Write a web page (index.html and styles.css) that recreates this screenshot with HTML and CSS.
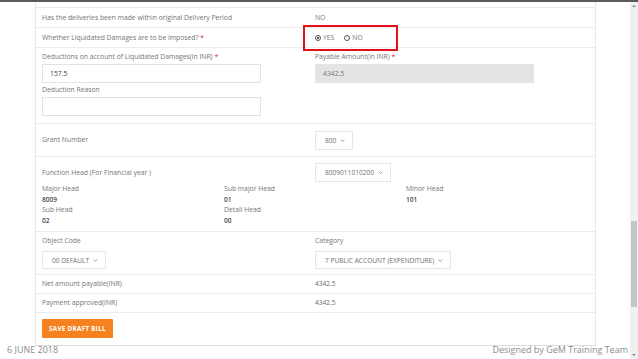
FILE: index.html
```html
<!DOCTYPE html>
<html>
<head>
<meta charset="utf-8">
<link rel="stylesheet" href="styles.css">
</head>
<body>
<div class="topline"></div>
<div class="main">
  <div class="page">
    <div class="card">
      <div class="row row-line">
        <div class="cell label">Has the deliveries been made within original Delivery Period</div>
        <div class="cell label">NO</div>
      </div>
      <div class="row row-line">
        <div class="cell label">Whether Liquidated Damages are to be imposed? <span class="req">*</span></div>
        <div class="cell">
          <div class="radios">
            <span class="radio on"></span><span class="label">YES</span>
            <span class="radio"></span><span class="label">NO</span>
          </div>
        </div>
      </div>
      <div class="row row-deduct">
        <div class="cell stack">
          <div class="label">Deductions on account of Liquidated Damages(in INR) <span class="req">*</span></div>
          <div class="input">157.5</div>
          <div class="label">Deduction Reason</div>
          <div class="input"></div>
        </div>
        <div class="cell stack">
          <div class="label">Payable Amount(in INR) <span class="req">*</span></div>
          <div class="input disabled">4342.5</div>
        </div>
      </div>
      <div class="row row-grant">
        <div class="cell label">Grant Number</div>
        <div class="cell"><div class="select">800 <svg class="chev" viewBox="0 0 8 5"><path d="M1 1l3 3 3-3"/></svg></div></div>
      </div>
      <div class="row row-func">
        <div class="func-top">
          <div class="cell label">Function Head (For Financial year )</div>
          <div class="cell"><div class="select">8009011010200 <svg class="chev" viewBox="0 0 8 5"><path d="M1 1l3 3 3-3"/></svg></div></div>
        </div>
        <div class="heads">
          <div class="head"><div class="label">Major Head</div><div class="val">8009</div></div>
          <div class="head"><div class="label">Sub major Head</div><div class="val">01</div></div>
          <div class="head"><div class="label">Minor Head</div><div class="val">101</div></div>
          <div class="head"><div class="label">Sub Head</div><div class="val">02</div></div>
          <div class="head"><div class="label">Detail Head</div><div class="val">00</div></div>
        </div>
      </div>
      <div class="row row-object">
        <div class="cell stack">
          <div class="label">Object Code</div>
          <div class="select sel2">00 DEFAULT <svg class="chev" viewBox="0 0 8 5"><path d="M1 1l3 3 3-3"/></svg></div>
        </div>
        <div class="cell stack">
          <div class="label">Category</div>
          <div class="select sel2">7 PUBLIC ACCOUNT (EXPENDITURE) <svg class="chev" viewBox="0 0 8 5"><path d="M1 1l3 3 3-3"/></svg></div>
        </div>
      </div>
      <div class="row row-line row-sum">
        <div class="cell label">Net amount payable(INR)</div>
        <div class="cell value">4342.5</div>
      </div>
      <div class="row row-line row-sum">
        <div class="cell label">Payment approved(INR)</div>
        <div class="cell value">4342.5</div>
      </div>
      <div class="row row-btn">
        <button class="btn">SAVE DRAFT BILL</button>
      </div>
    </div>
    <div class="footer">
      <span>6 JUNE 2018</span>
      <span>Designed by GeM Training Team</span>
    </div>
  </div>
  <div class="scrollbar">
    <div class="arrow up"></div>
    <div class="track"><div class="thumb"></div></div>
    <div class="arrow down"></div>
  </div>
</div>
</body>
</html>
```

FILE: styles.css
```css
* { box-sizing: border-box; }
html, body { margin: 0; padding: 0; }
body {
  width: 638px;
  height: 359px;
  overflow: hidden;
  background: #fff;
  font-family: "Open Sans", "Liberation Sans", sans-serif;
  font-size: 7px;
  color: #6f6f6f;
}
.topline { height: 2px; background: #5c5c5c; }
.main { display: flex; height: 357px; }
.page { width: 630px; display: flex; flex-direction: column; }
.card {
  margin-left: 35px;
  width: 561px;
  border-left: 1px solid #e8e8e8;
  border-right: 1px solid #e8e8e8;
  border-bottom: 1px solid #dcdcdc;
  padding-top: 5px;
}
.row {
  display: grid;
  grid-template-columns: 1fr 1fr;
  padding: 0 7px 0 6px;
  border-top: 1px solid #ececec;
}
.row-line { height: 20px; align-items: center; }
.row-sum { height: 19px; }
.label { font-size: 6.8px; line-height: 10px; color: #767676; white-space: nowrap; }
.value { font-size: 6.6px; line-height: 10px; color: #6a6a6a; }
.req { color: #e0261c; }
.stack { display: flex; flex-direction: column; }
.input {
  width: 219px;
  height: 19px;
  border: 1px solid #e2e2e2;
  background: #fff;
  font-size: 6.8px;
  color: #444;
  padding-left: 7px;
  display: flex;
  align-items: center;
  margin: 2px 0 2px;
}
.input.disabled { background: #e4e4e4; border-color: #e4e4e4; color: #777; }
.row-deduct { height: 76px; padding-top: 4px; }
.radios {
  display: flex;
  align-items: center;
  height: 10px;
  position: relative;
}
.radios::before {
  content: "";
  position: absolute;
  left: -12px;
  top: -8px;
  width: 91px;
  height: 22px;
  border: 2px solid #e3101a;
}
.radio {
  width: 6px; height: 6px;
  border: 1px solid #555;
  border-radius: 50%;
  margin-right: 2px;
  position: relative;
}
.radio.on::after {
  content: "";
  position: absolute;
  left: 1px; top: 1px;
  width: 2px; height: 2px;
  border-radius: 50%;
  background: #222;
}
.radios .label + .radio { margin-left: 10px; }
.select {
  display: flex;
  width: max-content;
  align-items: center;
  height: 19px;
  border: 1px solid #e6e6e6;
  padding: 0 7px 0 9px;
  font-size: 6.6px;
  color: #707070;
  white-space: nowrap;
}
.chev { width: 5px; height: 3px; margin-left: 4px; fill: none; stroke: #777; stroke-width: 1.2; }
.row-grant { height: 33px; align-items: center; }
.row-func { height: 75px; padding-top: 6px; display: block; }
.func-top { display: grid; grid-template-columns: 1fr 1fr; align-items: center; }
.heads {
  display: grid;
  grid-template-columns: repeat(3, 1fr);
  margin-top: 2px;
}
.val { font-size: 6.6px; line-height: 11px; color: #4a4a4a; font-weight: 600; }
.row-object { height: 43px; padding-top: 4px; }
.row-object .label { margin-bottom: 5px; }
.sel2 { height: 18px; }
.row-btn { height: 33px; display: block; padding-top: 6px; }
.btn {
  display: block;
  width: 71px;
  height: 19px;
  border: none;
  border-radius: 1px;
  background: #f5821f;
  color: #fff;
  font-family: "Open Sans", "Liberation Sans", sans-serif;
  font-weight: 700;
  font-size: 6.3px;
  letter-spacing: 0.3px;
  padding: 0;
}
.footer {
  display: flex;
  justify-content: space-between;
  padding: 0 2px 0 7px;
  font-size: 9px;
  line-height: 8px;
  color: #8c8c8c;
}
.scrollbar {
  width: 8px;
  background: #f0f0f0;
  display: flex;
  flex-direction: column;
}
.arrow { height: 8px; position: relative; }
.arrow::after {
  content: "";
  position: absolute;
  left: 2px;
  border-left: 2px solid transparent;
  border-right: 2px solid transparent;
}
.arrow.up::after { top: 3px; border-bottom: 2px solid #888; }
.arrow.down::after { top: 3px; border-top: 2px solid #888; }
.track { flex: 1; padding-top: 211px; }
.thumb { height: 86px; background: #c6c6c6; margin: 0 1px; }
```
